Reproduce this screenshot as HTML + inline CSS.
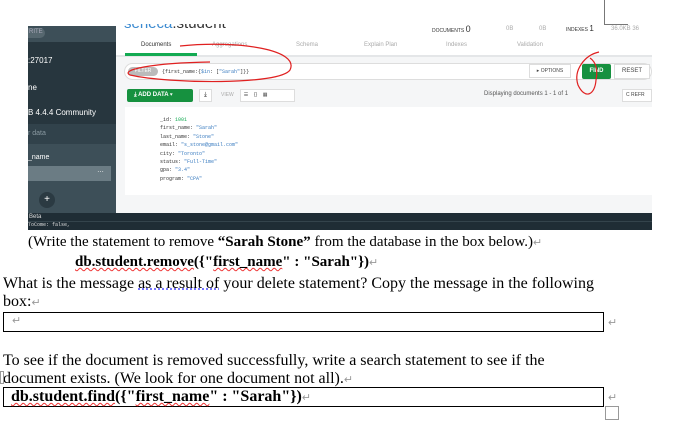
<!DOCTYPE html>
<html><head><meta charset="utf-8"><style>
*{margin:0;padding:0;box-sizing:border-box}
body{width:688px;height:427px;background:#fff;position:relative;overflow:hidden;font-family:"Liberation Sans",sans-serif}
.a{position:absolute;white-space:nowrap}
.s{font-family:"Liberation Serif",serif;font-size:15px;color:#000}
.t{font-size:16px}
.m{font-family:"Liberation Mono",monospace;font-size:5px;color:#333}
.m b{font-weight:normal;color:#3a7cc0}
.sq{text-decoration:underline wavy #e33;text-decoration-thickness:1px}
.ret{color:#999;font-size:11px}
</style></head><body>
<!-- sidebar -->
<div class="a" style="left:28px;top:26px;width:88px;height:187px;background:#3d4f58"></div>
<div class="a" style="left:28px;top:42px;width:88px;height:82px;background:#27363e"></div>
<div class="a" style="left:28px;top:124px;width:88px;height:20px;background:#31424b"></div>
<div class="a" style="left:28px;top:166px;width:83px;height:15px;background:#6b7c84"></div>
<div class="a" style="left:28px;top:28px;width:17px;height:10px;background:#56676f;border-radius:0 5px 5px 0"></div>
<div class="a" style="left:29px;top:29px;font-size:6px;color:#aab">RITE</div>
<div class="a" style="left:28px;top:56px;font-size:8px;color:#fff">:27017</div>
<div class="a" style="left:28px;top:83px;font-size:8px;color:#fff">ne</div>
<div class="a" style="left:28px;top:108px;font-size:8px;color:#fff">B 4.4.4 Community</div>
<div class="a" style="left:28px;top:130px;font-size:7px;color:#8a9aa2">r data</div>
<div class="a" style="left:28px;top:154px;font-size:7px;color:#fff">_name</div>
<div class="a" style="left:97px;top:167px;font-size:7px;color:#fff">…</div>
<div class="a" style="left:39px;top:192px;width:16px;height:16px;border-radius:50%;background:#2b3a42;color:#fff;font-size:10px;text-align:center;line-height:16px">+</div>
<!-- main -->
<div class="a" style="left:116px;top:57px;width:536px;height:156px;background:#f5f6f7"></div>
<div class="a" style="left:125px;top:107px;width:527px;height:88px;background:#fff"></div>
<div class="a" style="left:116px;top:55px;width:536px;height:2px;background:#e4e6e8"></div>
<div class="a" style="left:125px;top:53px;width:72px;height:3px;background:#13aa52"></div>
<div class="a" style="left:116px;top:24px;width:200px;height:14px;overflow:hidden"><div class="a" style="left:8px;top:-9px;font-size:15px;color:#333"><span style="color:#3b8ad0">seneca</span>.student</div></div>
<div class="a" style="left:141px;top:42px;font-size:6px;color:#333">Documents</div>
<div class="a" style="left:212px;top:42px;font-size:6px;color:#aaa">Aggregations</div>
<div class="a" style="left:296px;top:42px;font-size:6px;color:#aaa">Schema</div>
<div class="a" style="left:364px;top:42px;font-size:6px;color:#aaa">Explain Plan</div>
<div class="a" style="left:446px;top:42px;font-size:6px;color:#aaa">Indexes</div>
<div class="a" style="left:517px;top:42px;font-size:6px;color:#aaa">Validation</div>
<div class="a" style="left:432px;top:24px;font-size:5px;color:#333">DOCUMENTS <span style="font-size:9px">0</span></div>
<div class="a" style="left:506px;top:26px;font-size:6px;color:#aaa">0B</div>
<div class="a" style="left:539px;top:26px;font-size:6px;color:#aaa">0B</div>
<div class="a" style="left:566px;top:24px;font-size:5px;color:#333">INDEXES <span style="font-size:8px">1</span></div>
<div class="a" style="left:611px;top:26px;font-size:6px;color:#aaa">36.0KB 36</div>
<div class="a" style="left:604px;top:0;width:1px;height:25px;background:#777"></div>
<div class="a" style="left:604px;top:24px;width:24px;height:1px;background:#777"></div>
<div class="a" style="left:124px;top:63px;width:528px;height:17px;background:#fff;border:1px solid #ddd;border-radius:9px"></div>
<div class="a" style="left:128px;top:67px;width:30px;height:9px;background:#bbb;border-radius:5px;font-size:5px;color:#fff;text-align:center;line-height:9px">FILTER</div>
<div class="a m" style="left:162px;top:69px">{first_name:{<b>$in</b>: [<b>"Sarah"</b>]}}</div>
<div class="a" style="left:529px;top:64px;width:42px;height:14px;border:1px solid #ddd;background:#fff;font-size:5px;line-height:12px;text-align:center;color:#444">▸ OPTIONS</div>
<div class="a" style="left:582px;top:64px;width:29px;height:15px;background:#16913f;border-radius:2px;color:#fff;font-size:6px;font-weight:bold;text-align:center;line-height:15px">FIND</div>
<div class="a" style="left:614px;top:64px;width:36px;height:15px;border:1px solid #ddd;background:#fff;font-size:6px;text-align:center;line-height:13px;color:#444">RESET</div>
<div class="a" style="left:127px;top:89px;width:66px;height:13px;background:#16913f;border-radius:2px;color:#fff;font-size:6px;font-weight:bold;line-height:13px;padding-left:7px">⤓ ADD DATA ▾</div>
<div class="a" style="left:199px;top:89px;width:13px;height:13px;border:1px solid #ddd;background:#fff;font-size:6px;text-align:center;line-height:11px">⤓</div>
<div class="a" style="left:221px;top:92px;font-size:5px;color:#aaa">VIEW</div>
<div class="a" style="left:240px;top:89px;width:55px;height:13px;border:1px solid #ddd;background:#fff;font-size:5px;line-height:11px;color:#555">&nbsp;&nbsp;☰&nbsp;&nbsp;&nbsp; {}&nbsp;&nbsp;&nbsp; ▦</div>
<div class="a" style="left:484px;top:91px;font-size:6px;color:#555">Displaying documents 1 - 1 of 1</div>
<div class="a" style="left:622px;top:89px;width:30px;height:13px;border:1px solid #ddd;background:#fff;font-size:5px;line-height:11px;color:#444;padding-left:3px">C REFR</div>
<div class="a m" style="left:160px;top:116px;line-height:8.4px">_id: <span style="color:#13aa52">1001</span><br>first_name: <b>"Sarah"</b><br>last_name: <b>"Stone"</b><br>email: <b>"s_stone@gmail.com"</b><br>city: <b>"Toronto"</b><br>status: <b>"Full-Time"</b><br>gpa: <b>"3.4"</b><br>program: <b>"CPA"</b></div>
<div class="a" style="left:28px;top:213px;width:624px;height:17px;background:#1f2d35"></div>
<div class="a" style="left:29px;top:214px;font-size:6px;color:#ddd">Beta</div>
<div class="a" style="left:28px;top:222px;font-size:5px;color:#ddd;font-family:'Liberation Mono',monospace">ToCome: false,</div>
<div class="a" style="left:28px;top:221px;width:624px;height:1px;background:#34444c"></div>
<!-- red scribbles -->
<svg class="a" style="left:0;top:0" width="688" height="230"><g fill="none" stroke="#e02020" stroke-width="1.2">
<path d="M180 46 C240 40 300 50 290 70 C280 85 170 84 130 75 C120 70 150 63 210 62"/>
<path d="M599 52 C585 55 573 70 578 85 C585 100 595 95 596 80 C598 70 596 62 590 58"/>
</g></svg>
<!-- document text -->
<div class="a s" style="left:28px;top:234px">(Write the statement to remove <b>“Sarah Stone”</b> from the database in the box below.)<span class="ret">↵</span></div>
<div class="a s" style="left:75px;top:254px;font-weight:bold"><span class="sq">db.student.remove</span>({"<span class="sq">first_name</span>" : "Sarah"})<span class="ret" style="font-weight:normal">↵</span></div>
<div class="a s t" style="left:3px;top:275px">What is the message <span style="text-decoration:underline dotted #55f">as a result of</span> your delete statement? Copy the message in the following</div>
<div class="a s t" style="left:3px;top:293px">box:<span class="ret">↵</span></div>
<div class="a" style="left:3px;top:312px;width:601px;height:20px;border:1px solid #000"></div>
<div class="a ret" style="left:12px;top:314px">↵</div>
<div class="a ret" style="left:608px;top:316px">↵</div>
<div class="a s t" style="left:3px;top:352px">To see if the document is removed successfully, write a search statement to see if the</div>
<div class="a s t" style="left:3px;top:370px">document exists. (We look for one document not all).<span class="ret">↵</span></div>
<div class="a" style="left:0;top:371px;width:4px;height:13px;border:1px solid #999"></div>
<div class="a" style="left:3px;top:387px;width:601px;height:20px;border:1px solid #000"></div>
<div class="a s t" style="left:11px;top:388px;font-weight:bold"><span class="sq">db.student.find</span>({"<span class="sq">first_name</span>" : "Sarah"})<span class="ret" style="font-weight:normal">↵</span></div>
<div class="a ret" style="left:608px;top:391px">↵</div>
<div class="a" style="left:605px;top:406px;width:14px;height:14px;border:1px solid #999"></div>
</body></html>
